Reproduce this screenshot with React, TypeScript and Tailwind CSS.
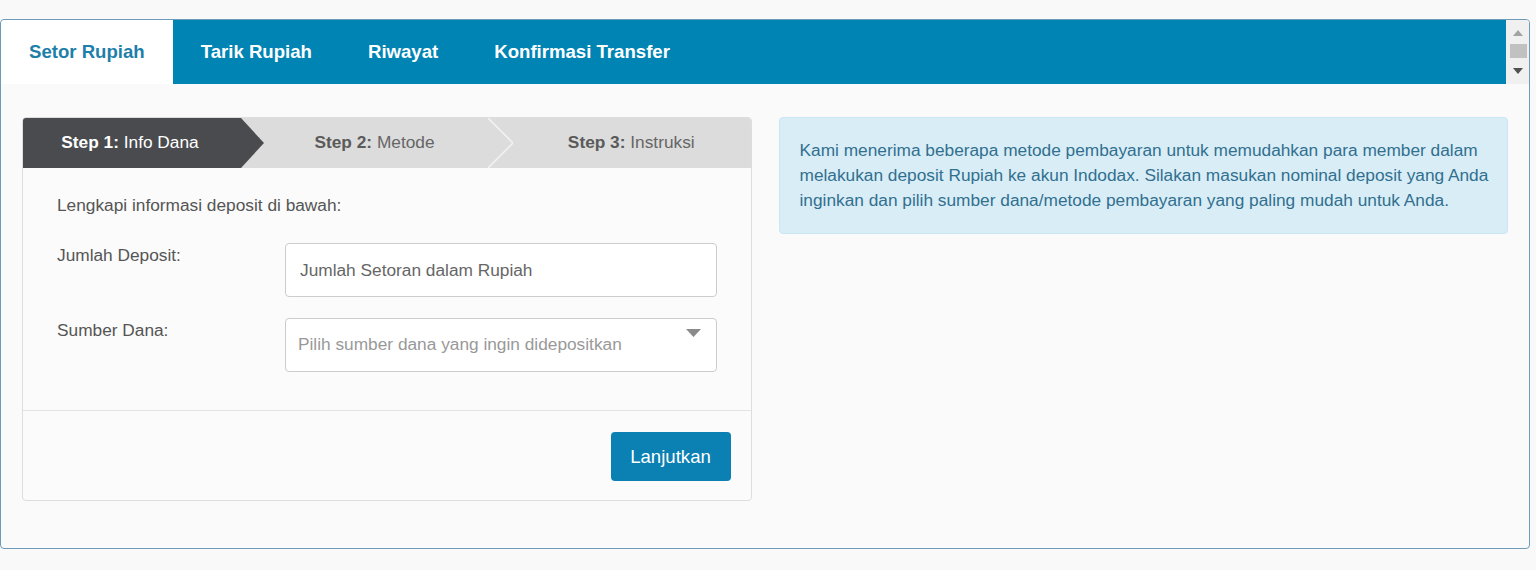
import React from "react";

const font = { fontFamily: '"Liberation Sans", Arial, sans-serif' };

function Tabs() {
  const tabs = ["Setor Rupiah", "Tarik Rupiah", "Riwayat", "Konfirmasi Transfer"];
  return (
    <div className="flex h-[64px]">
      <div className="flex flex-1 bg-[#0084b4]">
        {tabs.map((t, i) => (
          <div
            key={t}
            className={
              i === 0
                ? "flex items-center px-[28px] bg-white text-[#1e7fa8] text-[18.6px] font-bold"
                : "flex items-center px-[28px] text-white text-[18.6px] font-bold"
            }
          >
            {t}
          </div>
        ))}
      </div>
      <div className="w-[23px] bg-[#f0f0f0] flex flex-col items-center">
        <div className="h-[24px] flex items-center justify-center pt-[2px]">
          <svg width="10" height="6" viewBox="0 0 10 6">
            <polygon points="0,6 5,0 10,6" fill="#a3a3a3" />
          </svg>
        </div>
        <div className="h-[14px] w-[17px] bg-[#c1c1c1] ml-[2px]" />
        <div className="flex-1 flex items-center justify-center">
          <svg width="10" height="6" viewBox="0 0 10 6">
            <polygon points="0,0 10,0 5,6" fill="#505050" />
          </svg>
        </div>
      </div>
    </div>
  );
}

function StepHeader() {
  return (
    <div className="flex h-[50px] bg-[#dcdcdc] text-[17.3px]">
      <div className="w-[218px] bg-[#494b4e] text-white flex items-center justify-center pr-[4px]">
        <span className="font-bold">Step 1:</span>
        <span>&nbsp;Info Dana</span>
      </div>
      <svg width="25" height="50" viewBox="0 0 25 50" className="shrink-0">
        <polygon points="0,0 23,25 0,50" fill="#494b4e" />
      </svg>
      <div className="w-[222px] flex items-center justify-center text-[#666] pr-[5px]">
        <span className="font-bold text-[#5a5a5a]">Step 2:</span>
        <span>&nbsp;Metode</span>
      </div>
      <svg width="25" height="50" viewBox="0 0 25 50" className="shrink-0">
        <polyline points="0,0 25,25 0,50" fill="none" stroke="#f4f4f4" strokeWidth="1.5" />
      </svg>
      <div className="flex-1 flex items-center justify-center text-[#666] pr-[1px]">
        <span className="font-bold text-[#5a5a5a]">Step 3:</span>
        <span>&nbsp;Instruksi</span>
      </div>
    </div>
  );
}

function LeftPanel() {
  return (
    <div className="border border-[#dddddd] rounded-[4px] overflow-hidden bg-[#fbfbfb]">
      <StepHeader />
      <div className="px-[34px] pt-[25px] pb-[38px] text-[17.3px] text-[#555]">
        <div className="leading-[24px] mb-[26px]">Lengkapi informasi deposit di bawah:</div>
        <div className="flex flex-col gap-[21px]">
          <div className="flex">
            <div className="w-[228px] leading-[24px]">Jumlah Deposit:</div>
            <input
              className="flex-1 h-[54px] border border-[#cccccc] rounded-[4px] bg-white px-[14px] text-[17.3px] placeholder:text-[#666] outline-none"
              style={font}
              placeholder="Jumlah Setoran dalam Rupiah"
            />
          </div>
          <div className="flex">
            <div className="w-[228px] leading-[24px]">Sumber Dana:</div>
            <div className="flex-1 h-[54px] border border-[#cccccc] rounded-[4px] bg-white pl-[12px] pr-[15px] flex items-center justify-between">
              <span className="text-[#999]">Pilih sumber dana yang ingin didepositkan</span>
              <svg width="15" height="8" viewBox="0 0 15 8" className="self-start mt-[10px]">
                <polygon points="0,0 15,0 7.5,8" fill="#8a8a8a" />
              </svg>
            </div>
          </div>
        </div>
      </div>
      <div className="border-t border-[#e3e3e3] pt-[21px] pb-[19px] pr-[20px] flex justify-end">
        <button className="h-[49px] w-[120px] rounded-[4px] bg-[#0a80b3] text-white text-[18.6px]" style={font}>
          Lanjutkan
        </button>
      </div>
    </div>
  );
}

function InfoBox() {
  return (
    <div className="border border-[#c9e6f2] bg-[#d9edf7] rounded-[4px] pl-[20px] pr-[8px] pt-[20px] pb-[20px] text-[#31708f] text-[17.3px] leading-[25px] whitespace-nowrap">
      Kami menerima beberapa metode pembayaran untuk memudahkan para member dalam
      <br />
      melakukan deposit Rupiah ke akun Indodax. Silakan masukan nominal deposit yang Anda
      <br />
      inginkan dan pilih sumber dana/metode pembayaran yang paling mudah untuk Anda.
    </div>
  );
}

export default function App() {
  return (
    <div className="min-h-[570px] bg-[#f9f9f9] pt-[19px]" style={font}>
      <div className="w-[1530px] border border-[#6f9bbb] rounded-[4px] overflow-hidden bg-[#fafafa]">
        <Tabs />
        <div className="px-[21px] pt-[33px] pb-[47px] grid grid-cols-2 gap-[27px] items-start">
          <LeftPanel />
          <InfoBox />
        </div>
      </div>
    </div>
  );
}
